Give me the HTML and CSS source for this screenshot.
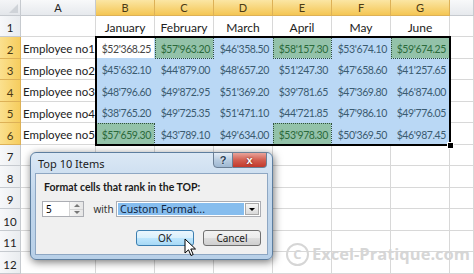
FILE: index.html
```html
<!DOCTYPE html>
<html lang="en">
<head>
    <meta charset="UTF-8">
    <title>Top 10 Items</title>
    <link rel="stylesheet" href="styles.css">
</head>
<body>
    <div class="sheet">
        <div class="row head">
            <div class="corner"><span class="tri"></span></div>
            <div class="ch">A</div>
            <div class="ch sel">B</div>
            <div class="ch sel">C</div>
            <div class="ch sel">D</div>
            <div class="ch sel">E</div>
            <div class="ch sel">F</div>
            <div class="ch sel">G</div>
            <div class="ch"></div>
        </div>
        <div class="row short">
            <div class="rh">1</div>
            <div class="c"></div>
            <div class="c month">January</div>
            <div class="c month">February</div>
            <div class="c month">March</div>
            <div class="c month">April</div>
            <div class="c month">May</div>
            <div class="c month">June</div>
            <div class="c"></div>
        </div>
        <div class="row">
            <div class="rh sel">2</div>
            <div class="c name">Employee no1</div>
            <div class="c num active">$52'368.25</div>
            <div class="c num top">$57'963.20</div>
            <div class="c num">$46'358.50</div>
            <div class="c num top">$58'157.30</div>
            <div class="c num">$53'674.10</div>
            <div class="c num top">$59'674.25</div>
            <div class="c"></div>
        </div>
        <div class="row short">
            <div class="rh sel">3</div>
            <div class="c name">Employee no2</div>
            <div class="c num">$45'632.10</div>
            <div class="c num">$44'879.00</div>
            <div class="c num">$48'657.20</div>
            <div class="c num">$51'247.30</div>
            <div class="c num">$47'658.60</div>
            <div class="c num">$41'257.65</div>
            <div class="c"></div>
        </div>
        <div class="row">
            <div class="rh sel">4</div>
            <div class="c name">Employee no3</div>
            <div class="c num">$48'796.60</div>
            <div class="c num">$49'872.95</div>
            <div class="c num">$51'369.20</div>
            <div class="c num">$39'781.65</div>
            <div class="c num">$47'369.80</div>
            <div class="c num">$46'874.00</div>
            <div class="c"></div>
        </div>
        <div class="row short">
            <div class="rh sel">5</div>
            <div class="c name">Employee no4</div>
            <div class="c num">$38'765.20</div>
            <div class="c num">$49'725.35</div>
            <div class="c num">$51'471.10</div>
            <div class="c num">$44'721.85</div>
            <div class="c num">$47'986.10</div>
            <div class="c num">$49'776.05</div>
            <div class="c"></div>
        </div>
        <div class="row">
            <div class="rh sel">6</div>
            <div class="c name">Employee no5</div>
            <div class="c num top">$57'659.30</div>
            <div class="c num">$43'789.10</div>
            <div class="c num">$49'634.00</div>
            <div class="c num top">$53'978.30</div>
            <div class="c num">$50'369.50</div>
            <div class="c num">$46'987.45</div>
            <div class="c"></div>
        </div>
        <div class="row short">
            <div class="rh">7</div>
            <div class="c"></div><div class="c"></div><div class="c"></div><div class="c"></div>
            <div class="c"></div><div class="c"></div><div class="c"></div><div class="c"></div>
        </div>
        <div class="row">
            <div class="rh">8</div>
            <div class="c"></div><div class="c"></div><div class="c"></div><div class="c"></div>
            <div class="c"></div><div class="c"></div><div class="c"></div><div class="c"></div>
        </div>
        <div class="row short">
            <div class="rh">9</div>
            <div class="c"></div><div class="c"></div><div class="c"></div><div class="c"></div>
            <div class="c"></div><div class="c"></div><div class="c"></div><div class="c"></div>
        </div>
        <div class="row">
            <div class="rh">10</div>
            <div class="c"></div><div class="c"></div><div class="c"></div><div class="c"></div>
            <div class="c"></div><div class="c"></div><div class="c"></div><div class="c"></div>
        </div>
        <div class="row short">
            <div class="rh">11</div>
            <div class="c"></div><div class="c"></div><div class="c"></div><div class="c"></div>
            <div class="c"></div><div class="c"></div><div class="c"></div><div class="c"></div>
        </div>
        <div class="row">
            <div class="rh">12</div>
            <div class="c"></div><div class="c"></div><div class="c"></div><div class="c"></div>
            <div class="c"></div><div class="c"></div><div class="c"></div><div class="c"></div>
        </div>

        <div class="selection"><span class="handle"></span></div>
    </div>

    <div class="watermark"><span class="copy">C</span>Excel-Pratique.com</div>

    <div class="dialog">
        <div class="titlebar">
            <span class="title">Top 10 Items</span>
            <div class="caption-btns">
                <span class="help">?</span>
                <span class="close">x</span>
            </div>
        </div>
        <div class="client">
            <div class="prompt">Format cells that rank in the TOP:</div>
            <div class="field-row">
                <div class="spinner">
                    <span class="spin-val">5</span>
                    <span class="spin-btns">
                        <span class="spin up"></span>
                        <span class="spin down"></span>
                    </span>
                </div>
                <span class="with">with</span>
                <div class="combo">
                    <span class="combo-val">Custom Format...</span>
                    <span class="combo-btn"><span class="arrow"></span></span>
                </div>
            </div>
            <div class="btn-row">
                <span class="btn ok">OK</span>
                <span class="btn">Cancel</span>
            </div>
        </div>
    </div>

    <svg class="cursor" width="13" height="20" viewBox="0 0 13 20">
        <path d="M1 1 L1 15 L4.5 11.8 L7 17.5 L9.2 16.5 L6.8 11 L11.5 11 Z" fill="#fff" stroke="#000" stroke-width="1"/>
    </svg>
</body>
</html>
```

FILE: styles.css
```css
body {
    margin: 0;
    width: 474px;
    height: 274px;
    overflow: hidden;
    position: relative;
    background-color: #fff;
    font-family: Lato, "Liberation Sans", sans-serif;
}
.sheet {
    position: relative;
}
.row {
    display: grid;
    grid-template-columns: 21px 75px repeat(6, 59px) 24px;
    height: 22px;
}
.row.short {
    height: 21px;
}
.row.head {
    height: 16px;
}
.row > div {
    box-sizing: border-box;
    display: flex;
    align-items: center;
    overflow: hidden;
    white-space: nowrap;
    border-right: 1px solid #d8d8d8;
    border-bottom: 1px solid #d8d8d8;
    font-size: 11.5px;
    color: #222;
}
.corner {
    position: relative;
    background: linear-gradient(#f4f5f7, #e3e6ea);
    border-color: #c6cacf !important;
}
.tri {
    position: absolute;
    right: 2px;
    bottom: 2px;
    border-left: 9px solid transparent;
    border-bottom: 9px solid #cfd3d8;
}
.ch {
    justify-content: center;
    background: linear-gradient(#f8f9fa, #e6e9ed);
    border-color: #c6cacf !important;
    color: #454545;
    font-size: 11px !important;
}
.ch.sel {
    background: linear-gradient(#fbe6a4, #f4c654);
    border-color: #ddb157 !important;
    color: #4a3a14;
}
.rh {
    justify-content: center;
    padding-top: 3px;
    background: linear-gradient(90deg, #f7f8fa, #e9ecef);
    border-color: #c6cacf !important;
    color: #454545;
}
.rh.sel {
    background: linear-gradient(90deg, #fbe08e, #f6cd5e);
    border-color: #ddb157 !important;
    color: #4a3a14;
}
.c {
    padding-top: 2px;
}
.month {
    justify-content: center;
    color: #333;
    font-size: 12px !important;
}
.name {
    padding-left: 2px;
    color: #1e1e1e;
}
.num {
    justify-content: flex-end;
    padding-right: 3px;
    background-color: #bad8f5;
    color: #3b5b70 !important;
    font-size: 10.5px !important;
    letter-spacing: -0.4px;
    border-color: #bad8f5 !important;
}
.num.active {
    background-color: #fff;
    color: #454545 !important;
}
.num.top {
    background-color: #93c2a9;
    color: #2b6a3b !important;
    outline: 1px dotted #2f4f3c;
    outline-offset: -1px;
}
.selection {
    position: absolute;
    left: 95px;
    top: 36px;
    width: 352px;
    height: 106px;
    border: 2px solid #000;
}
.handle {
    position: absolute;
    right: -5px;
    bottom: -5px;
    width: 5px;
    height: 5px;
    background: #000;
    border: 1px solid #fff;
}
.watermark {
    position: absolute;
    left: 286px;
    top: 242px;
    display: flex;
    align-items: center;
    gap: 3px;
    white-space: nowrap;
    font-family: "Open Sans", sans-serif;
    font-weight: bold;
    font-size: 16.5px;
    line-height: 24px;
    color: #d6d6d6;
}
.copy {
    box-sizing: border-box;
    width: 23px;
    height: 23px;
    border: 2.5px solid #d6d6d6;
    border-radius: 50%;
    display: flex;
    align-items: center;
    justify-content: center;
    font-size: 13px;
    line-height: 1;
}
.dialog {
    position: absolute;
    left: 30px;
    top: 152px;
    width: 243px;
    height: 108px;
    box-sizing: border-box;
    display: flex;
    flex-direction: column;
    padding: 0 4px 4px 4px;
    border: 1px solid #5d7e9f;
    border-radius: 6px;
    background: linear-gradient(#dbe8f5, #c2d7ec 40%, #b8d0e8);
    box-shadow: 1px 2px 8px rgba(0, 0, 0, 0.55);
    font-family: "Noto Sans", "Open Sans", sans-serif;
}
.titlebar {
    height: 20px;
    display: flex;
    align-items: center;
    justify-content: space-between;
}
.title {
    padding-left: 3px;
    font-size: 11px;
    color: #1b1b1b;
}
.caption-btns {
    display: flex;
    align-self: flex-start;
    margin-top: -1px;
    margin-right: 1px;
}
.help, .close {
    height: 14px;
    display: flex;
    align-items: center;
    justify-content: center;
    font-family: "Liberation Sans", sans-serif;
    font-weight: bold;
    font-size: 11px;
    color: #fff;
    border: 1px solid #6b7f95;
}
.help {
    width: 18px;
    border-radius: 0 0 0 4px;
    background: linear-gradient(#e4edf7, #b8cce0 50%, #9fb8d2);
    color: #2b3f55;
    text-shadow: 0 0 2px #fff;
}
.close {
    width: 33px;
    border-left: none;
    border-radius: 0 0 4px 0;
    background: linear-gradient(#e8a39a, #d35f51 50%, #c2392b);
    text-shadow: 0 0 2px #5a1410;
}
.client {
    flex: 1;
    box-sizing: border-box;
    display: flex;
    flex-direction: column;
    padding: 7px 6px 0 6px;
    background-color: #f0f0f0;
    border: 1px solid #8ea7c3;
}
.prompt {
    padding-left: 2px;
    font-family: Lato, "Liberation Sans", sans-serif;
    font-weight: bold;
    font-size: 10.5px;
    color: #1b1b1b;
}
.field-row {
    display: flex;
    align-items: center;
    margin-top: 8px;
    height: 16px;
}
.spinner {
    width: 43px;
    height: 16px;
    box-sizing: border-box;
    display: flex;
    justify-content: space-between;
    background: #fff;
    border: 1px solid #abadb3;
}
.spin-val {
    padding-left: 3px;
    font-size: 10px;
    line-height: 14px;
    color: #000;
}
.spin-btns {
    width: 13px;
    display: flex;
    flex-direction: column;
    border-left: 1px solid #d5d5d5;
    background: linear-gradient(90deg, #f5f5f5, #e6e6e6);
}
.spin {
    flex: 1;
    display: flex;
    align-items: center;
    justify-content: center;
}
.spin.up::after {
    content: "";
    border-left: 3px solid transparent;
    border-right: 3px solid transparent;
    border-bottom: 3px solid #777;
}
.spin.down {
    border-top: 1px solid #d5d5d5;
}
.spin.down::after {
    content: "";
    border-left: 3px solid transparent;
    border-right: 3px solid transparent;
    border-top: 3px solid #777;
}
.with {
    margin-left: 9px;
    width: 23px;
    font-size: 10px;
    color: #333;
}
.combo {
    width: 147px;
    height: 16px;
    box-sizing: border-box;
    display: flex;
    padding: 1px;
    background: #fff;
    border: 1px solid #abadb3;
}
.combo-val {
    flex: 1;
    padding-left: 2px;
    background: #86bdee;
    font-size: 10.5px;
    line-height: 12px;
    color: #0f2440;
}
.combo-btn {
    width: 12px;
    margin-left: 1px;
    display: flex;
    align-items: center;
    justify-content: center;
    border: 1px solid #a9a9a9;
    background: linear-gradient(#f6f6f6, #dadada);
}
.arrow {
    border-left: 3px solid transparent;
    border-right: 3px solid transparent;
    border-top: 3px solid #000;
}
.btn-row {
    display: flex;
    justify-content: flex-end;
    gap: 9px;
    margin-top: 13px;
}
.btn {
    width: 58px;
    height: 16px;
    box-sizing: border-box;
    display: flex;
    align-items: center;
    justify-content: center;
    border: 1px solid #707070;
    border-radius: 3px;
    background: linear-gradient(#f2f2f2, #ebebeb 50%, #dddddd 51%, #cfcfcf);
    font-size: 10px;
    color: #1b1b1b;
}
.btn.ok {
    border-color: #3c7fb1;
    background: linear-gradient(#eaf6fd, #d9f0fc 50%, #bee6fd 51%, #a7d9f5);
}
.cursor {
    position: absolute;
    left: 184px;
    top: 238px;
}
```
